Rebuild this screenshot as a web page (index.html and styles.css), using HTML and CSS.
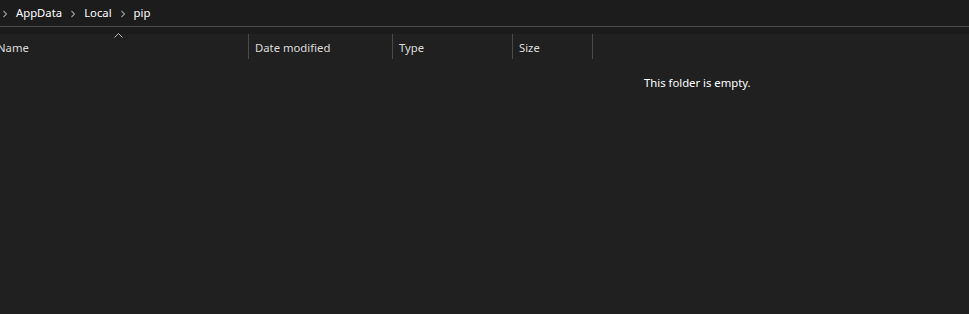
FILE: index.html
```html
<!DOCTYPE html>
<html>
<head>
<meta charset="utf-8">
<link rel="stylesheet" href="styles.css">
</head>
<body>
<div class="addr">
  <span class="chev first"><svg width="6" height="8" viewBox="0 0 6 8"><path d="M1.5 1 L4.5 4 L1.5 7" fill="none" stroke="#9a9a9a" stroke-width="1.1"/></svg></span>
  <span class="crumb">AppData</span>
  <span class="chev"><svg width="6" height="8" viewBox="0 0 6 8"><path d="M1.5 1 L4.5 4 L1.5 7" fill="none" stroke="#9a9a9a" stroke-width="1.1"/></svg></span>
  <span class="crumb">Local</span>
  <span class="chev"><svg width="6" height="8" viewBox="0 0 6 8"><path d="M1.5 1 L4.5 4 L1.5 7" fill="none" stroke="#9a9a9a" stroke-width="1.1"/></svg></span>
  <span class="crumb">pip</span>
</div>
<div class="rule"></div>
<div class="band"></div>
<div class="list">
  <div class="header">
    <div class="col name">Name<span class="sort"><svg width="9" height="5" viewBox="0 0 9 5"><path d="M0.5 4.5 L4.5 0.5 L8.5 4.5" fill="none" stroke="#bdbdbd" stroke-width="1"/></svg></span></div>
    <div class="col date">Date modified</div>
    <div class="col type">Type</div>
    <div class="col size">Size</div>
  </div>
  <div class="empty">This folder is empty.</div>
</div>
</body>
</html>
```
FILE: styles.css
```css
html, body {
  margin: 0;
  padding: 0;
  background: #202020;
  font-family: "Noto Sans", "Open Sans", sans-serif;
  font-size: 11.3px;
  color: #e8e8e8;
  overflow: hidden;
  width: 969px;
  height: 314px;
}
.addr {
  height: 26px;
  background: #1c1c1c;
  display: flex;
  align-items: center;
  padding-left: 0;
}
.chev {
  display: flex;
  align-items: center;
  justify-content: center;
  width: 22px;
  height: 26px;
  padding-top: 1px;
  box-sizing: border-box;
}
.chev.first {
  width: 16px;
  justify-content: flex-start;
  padding-left: 2px;
}
.crumb {
  color: #ffffff;
  line-height: 26px;
}
.rule {
  height: 1px;
  background: #4c4c4c;
}
.band {
  height: 7px;
  background: #1b1b1b;
}
.list {
  background: #202020;
}
.header {
  display: flex;
  height: 26px;
  margin-left: -9px;
}
.col {
  position: relative;
  box-sizing: border-box;
  padding-left: 6px;
  line-height: 27px;
  color: #dcdcdc;
  border-right: 1px solid #4a4a4a;
  height: 25px;
}
.name { width: 258px; }
.date { width: 144px; }
.type { width: 120px; }
.size { width: 80px; }
.sort {
  position: absolute;
  left: 123px;
  top: -1px;
  line-height: 0;
}
.empty {
  padding-left: 644px;
  padding-top: 15px;
  color: #ffffff;
}
```
